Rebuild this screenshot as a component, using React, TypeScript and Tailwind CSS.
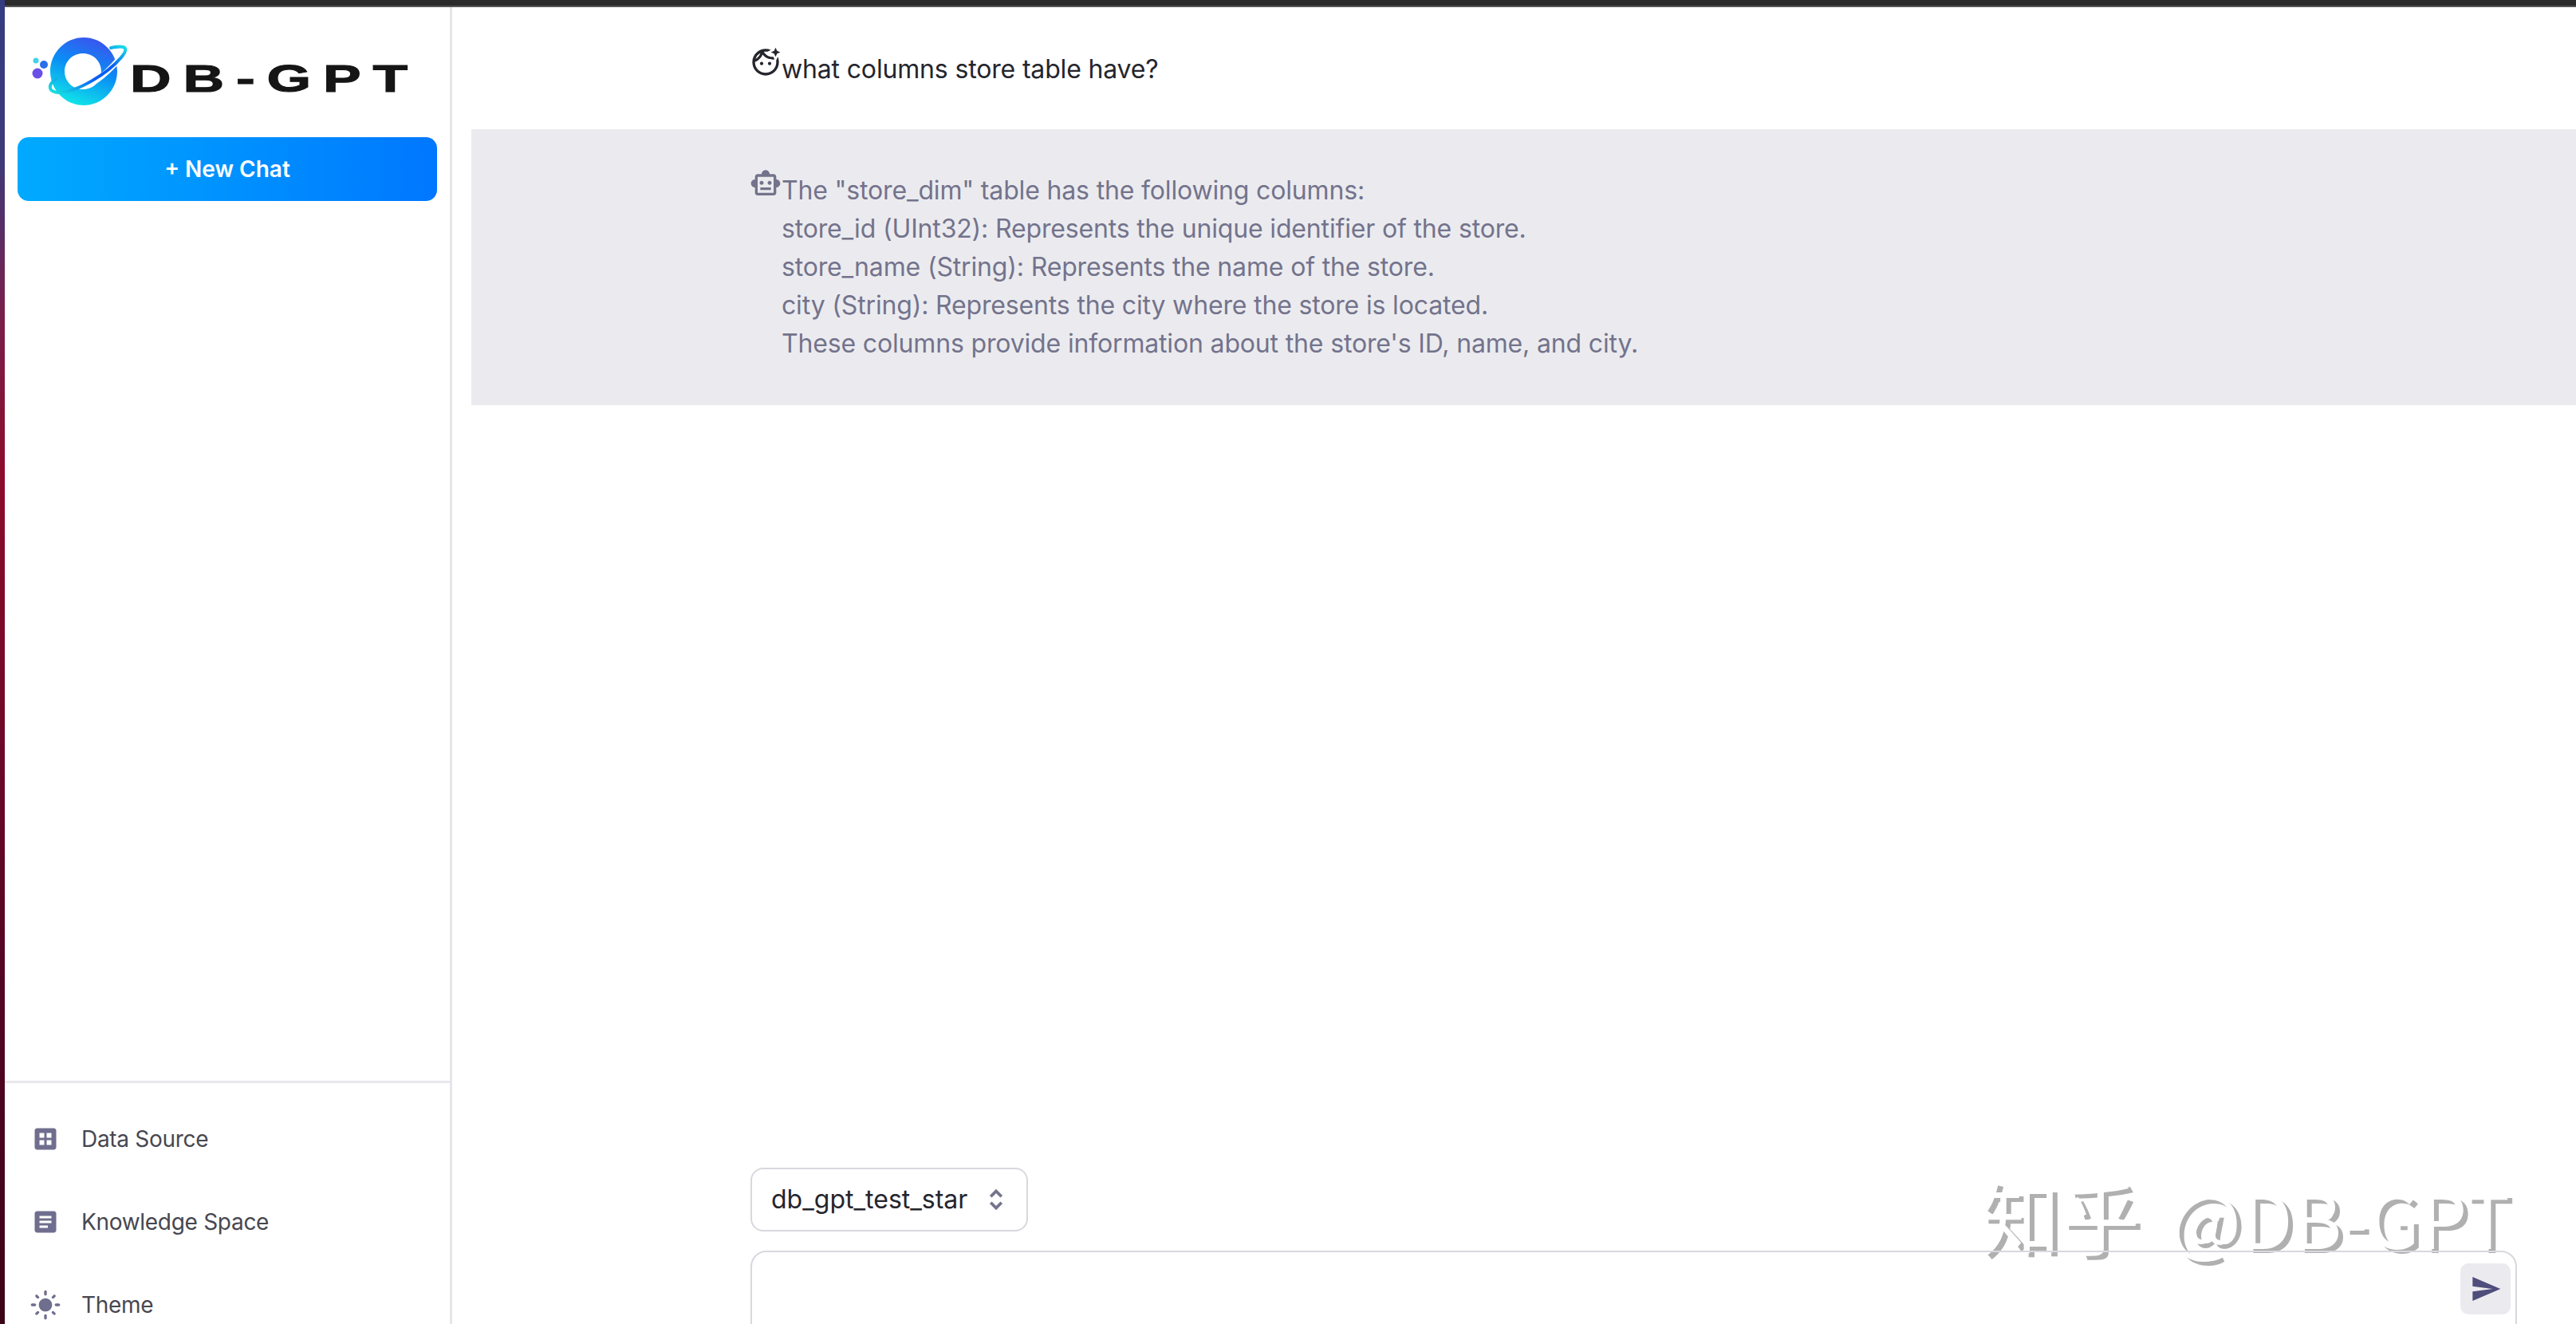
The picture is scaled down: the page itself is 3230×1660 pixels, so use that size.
import { MdArticle, MdDataset, MdLightMode, MdOutlineFaceRetouchingNatural, MdOutlineSmartToy, MdSend } from "react-icons/md"

const answerLines = [
  'The "store_dim" table has the following columns:',
  "store_id (UInt32): Represents the unique identifier of the store.",
  "store_name (String): Represents the name of the store.",
  "city (String): Represents the city where the store is located.",
  "These columns provide information about the store's ID, name, and city.",
]

function Logo() {
  return (
    <svg viewBox="40 45 480 90" className="h-[90px] w-[480px]">
      <defs>
        <linearGradient id="planet" x1="0.75" y1="0.05" x2="0.4" y2="1">
          <stop offset="0" stopColor="#3a55ee" />
          <stop offset="0.45" stopColor="#0a8df5" />
          <stop offset="1" stopColor="#10e4e8" />
        </linearGradient>
        <linearGradient id="orbit" x1="0" y1="1" x2="1" y2="0">
          <stop offset="0" stopColor="#18e6dc" />
          <stop offset="0.45" stopColor="#0a5cf5" />
          <stop offset="0.7" stopColor="#0a5cf5" />
          <stop offset="1" stopColor="#18e0e6" />
        </linearGradient>
      </defs>
      <circle cx="45" cy="76" r="3.5" fill="#3fd4e8" />
      <circle cx="55" cy="81" r="5" fill="#2a6fe8" />
      <circle cx="47" cy="92" r="6.5" fill="#6a4fe8" />
      <path
        fillRule="evenodd"
        fill="url(#planet)"
        d="M105 47c23 0 42 19 42 42.500s-19 42.500-42 42.500-42-19-42-42.500 19-42.500 42-42.500zM104 67c-13 0-23 10-23 22.500s10 22.500 23 22.500 23-10 23-22.500-10-22.500-23-22.500z"
      />
      <path d="M110 107C125 100 145 82 158 62" fill="none" stroke="#fff" strokeWidth="7" />
      <path
        d="M70 99C58 108 62 116 74 116C98 115 135 92 152 72C162 60 158 56 139 60"
        fill="none"
        stroke="url(#orbit)"
        strokeWidth="4"
        strokeLinecap="round"
      />
      <text
        x="163"
        y="115"
        textLength="363"
        lengthAdjust="spacingAndGlyphs"
        fill="#151515"
        stroke="#151515"
        strokeWidth="1"
        fontSize="48"
        fontWeight="700"
        fontFamily='"Liberation Sans", sans-serif'
        letterSpacing="10"
      >
        DB-GPT
      </text>
    </svg>
  )
}

function NavItem({ icon, label }: { icon: React.ReactNode; label: string }) {
  return (
    <div className="flex h-[104px] items-center pl-[22px]">
      <div className="mr-[17px] flex w-[57px] shrink-0 justify-center text-[#6f6e8e]">{icon}</div>
      <span className="text-[28px] tracking-[-0.3px] text-[#47474f]">{label}</span>
    </div>
  )
}

export default function App() {
  return (
    <div className="flex h-[1660px] w-[3230px] overflow-hidden bg-white font-['Inter',sans-serif]">
      <div className="h-full w-[6px] shrink-0 bg-[linear-gradient(180deg,#343c80_0%,#3e3a78_12%,#7a1e4a_24%,#8c0c2c_36%,#70082a_55%,#520622_75%,#3c0418_100%)]" />
      <div className="flex min-w-0 flex-1 flex-col">
        <div className="h-[9px] shrink-0 border-b-2 border-[#555] bg-[#2b2b2b]" />
        <div className="flex min-h-0 flex-1">
          <aside className="flex w-[561px] shrink-0 flex-col border-r-[3px] border-[#e6e6ea]">
            <div className="pl-[34px] pt-[36px]">
              <Logo />
            </div>
            <button className="ml-[16px] mt-[37px] h-[80px] w-[526px] rounded-[14px] bg-gradient-to-r from-[#00aaff] to-[#0077ff] text-[28px] font-semibold text-white">
              + New Chat
            </button>
            <div className="mt-auto h-[305px] overflow-hidden border-t-[3px] border-[#e8e8ec] pt-[18px]">
              <NavItem icon={<MdDataset className="h-9 w-9" />} label="Data Source" />
              <NavItem icon={<MdArticle className="h-9 w-9" />} label="Knowledge Space" />
              <NavItem icon={<MdLightMode className="h-10 w-10" />} label="Theme" />
            </div>
          </aside>
          <main className="flex min-w-0 flex-1 flex-col overflow-hidden pl-[24px] tracking-[-0.16px]">
            <div className="flex h-[153px] shrink-0 items-start pl-[349px] pt-[49px] text-[32px] leading-[48px] text-[#25252d]">
              <MdOutlineFaceRetouchingNatural className="h-10 w-10 shrink-0" />
              <span className="pt-[5px]">what columns store table have?</span>
            </div>
            <div className="flex h-[346px] shrink-0 items-start bg-[#ebebef] pl-[349px] pt-[48px] text-[32px] leading-[48px] text-[#73738c]">
              <MdOutlineSmartToy className="h-10 w-10 shrink-0" />
              <div className="pt-[5px]">
                {answerLines.map((line) => (
                  <div key={line}>{line}</div>
                ))}
              </div>
            </div>
            <div className="relative mt-auto h-[196px] shrink-0 pl-[350px] pr-[74px]">
              <div className="absolute left-[1892px] top-[4px] flex items-baseline whitespace-nowrap font-['Noto_Sans_CJK_SC',sans-serif] text-[100px] leading-[110px] tracking-normal text-white [text-shadow:6px_5px_0_#b0b0b0]">
                <span>知乎</span>
                <span className="ml-[38px] text-[94px]">@DB-GPT</span>
              </div>
              <div className="relative flex h-[80px] w-[348px] items-center rounded-[16px] border-2 border-[#d8d8de] pl-[24px] text-[32px] tracking-normal text-[#25252d]">
                <span>db_gpt_test_star</span>
                <svg viewBox="0 0 24 24" className="ml-auto mr-[20px] h-9 w-9 text-[#73738c]" fill="none" stroke="currentColor" strokeWidth="2.5">
                  <path d="M7.500 9.500L12 5l4.500 4.500M7.500 14.500L12 19l4.500-4.500" />
                </svg>
              </div>
              <div className="relative mt-[24px] flex h-[120px] justify-end rounded-[20px] border-2 border-[#d8d8de] pr-[6px] pt-[14px]">
                <button className="flex h-[64px] w-[63px] items-center justify-center rounded-[10px] bg-[#ebebef] text-[#4f4d7c]">
                  <MdSend className="h-10 w-10" />
                </button>
              </div>
            </div>
          </main>
        </div>
      </div>
    </div>
  )
}
